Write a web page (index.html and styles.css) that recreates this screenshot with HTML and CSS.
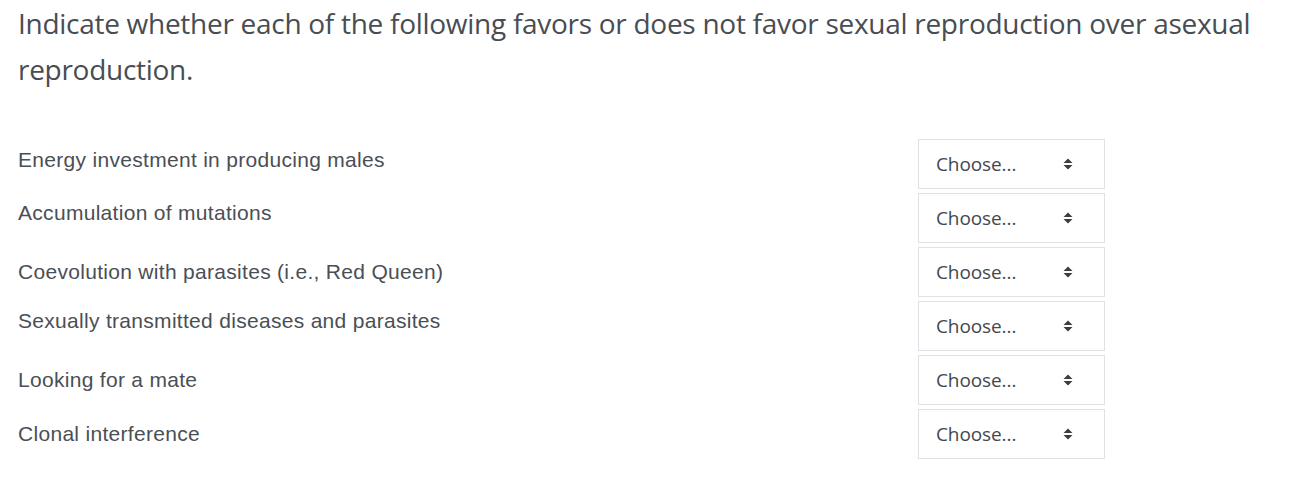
FILE: index.html
```html
<!DOCTYPE html>
<html>
<head>
<meta charset="utf-8">
<link rel="stylesheet" href="styles.css">
</head>
<body>
<div class="question">
  <p class="prompt">Indicate whether each of the following favors or does not favor sexual reproduction over asexual reproduction.</p>
  <div class="matches">
    <div class="row">
      <div class="label lift-sm">Energy investment in producing males</div>
      <div class="select"><span class="value">Choose...</span><svg class="caret" width="10" height="12" viewBox="0 0 10 12"><path d="M5 0.5 L9.5 5 H0.5 Z M0.5 7 H9.5 L5 11.5 Z" fill="#3a3f44"/></svg></div>
    </div>
    <div class="row">
      <div class="label lift-md">Accumulation of mutations</div>
      <div class="select"><span class="value">Choose...</span><svg class="caret" width="10" height="12" viewBox="0 0 10 12"><path d="M5 0.5 L9.5 5 H0.5 Z M0.5 7 H9.5 L5 11.5 Z" fill="#3a3f44"/></svg></div>
    </div>
    <div class="row">
      <div class="label">Coevolution with parasites (i.e., Red Queen)</div>
      <div class="select"><span class="value">Choose...</span><svg class="caret" width="10" height="12" viewBox="0 0 10 12"><path d="M5 0.5 L9.5 5 H0.5 Z M0.5 7 H9.5 L5 11.5 Z" fill="#3a3f44"/></svg></div>
    </div>
    <div class="row">
      <div class="label lift-lg">Sexually transmitted diseases and parasites</div>
      <div class="select"><span class="value">Choose...</span><svg class="caret" width="10" height="12" viewBox="0 0 10 12"><path d="M5 0.5 L9.5 5 H0.5 Z M0.5 7 H9.5 L5 11.5 Z" fill="#3a3f44"/></svg></div>
    </div>
    <div class="row">
      <div class="label">Looking for a mate</div>
      <div class="select"><span class="value">Choose...</span><svg class="caret" width="10" height="12" viewBox="0 0 10 12"><path d="M5 0.5 L9.5 5 H0.5 Z M0.5 7 H9.5 L5 11.5 Z" fill="#3a3f44"/></svg></div>
    </div>
    <div class="row">
      <div class="label">Clonal interference</div>
      <div class="select"><span class="value">Choose...</span><svg class="caret" width="10" height="12" viewBox="0 0 10 12"><path d="M5 0.5 L9.5 5 H0.5 Z M0.5 7 H9.5 L5 11.5 Z" fill="#3a3f44"/></svg></div>
    </div>
  </div>
</div>
</body>
</html>
```

FILE: styles.css
```css
html, body {
  margin: 0;
  padding: 0;
  background: #ffffff;
}

.question {
  padding: 0 18px;
  color: #4a4f55;
}

.prompt {
  margin: 0;
  padding-top: 0;
  font-family: "Open Sans", sans-serif;
  font-size: 28px;
  line-height: 46px;
  letter-spacing: -0.28px;
  color: #484d53;
}

.matches {
  margin-top: 47px;
  display: flex;
  flex-direction: column;
  gap: 4px;
}

.row {
  display: grid;
  grid-template-columns: 900px 187px;
  align-items: center;
}

.label {
  font-family: "Liberation Sans", Arial, sans-serif;
  font-size: 21px;
  letter-spacing: 0.3px;
  color: #4a4f55;
}

.lift-sm {
  padding-bottom: 8px;
}

.lift-md {
  padding-bottom: 10px;
}

.lift-lg {
  padding-bottom: 11px;
}

.select {
  box-sizing: border-box;
  height: 50px;
  border: 1px solid #dee2e6;
  display: flex;
  align-items: center;
  justify-content: space-between;
  padding: 0 31px 0 17px;
  background: #ffffff;
}

.value {
  font-family: "Open Sans", sans-serif;
  font-size: 19px;
  letter-spacing: -0.1px;
  color: #43484e;
}

.caret {
  display: block;
}
```
